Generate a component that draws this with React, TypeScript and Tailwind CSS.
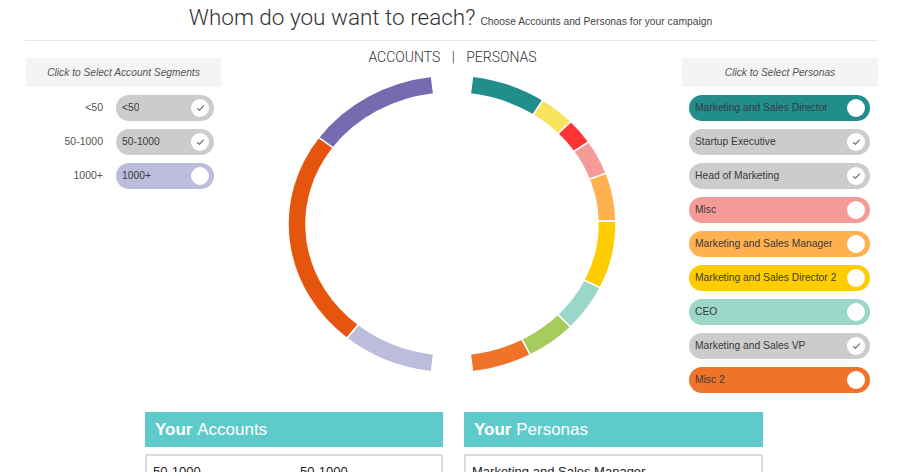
import React from "react";

const font = { fontFamily: '"Liberation Sans", Arial, sans-serif' };

type Seg = { from: number; to: number; color: string };

const accountSegs: Seg[] = [
  { from: 187.2, to: 219.9, color: "#bcbddc" },
  { from: 219.9, to: 305.6, color: "#e6550d" },
  { from: 305.6, to: 352.8, color: "#756bb1" },
];

const personaSegs: Seg[] = [
  { from: 7.2, to: 33.7, color: "#218e8c" },
  { from: 33.7, to: 46.5, color: "#f7e35e" },
  { from: 46.5, to: 56.5, color: "#ff3535" },
  { from: 56.5, to: 70.1, color: "#f59b97" },
  { from: 70.1, to: 88.8, color: "#ffb04f" },
  { from: 88.8, to: 115.4, color: "#ffcc00" },
  { from: 115.4, to: 133.7, color: "#9bd7c8" },
  { from: 133.7, to: 151.5, color: "#a5cc5d" },
  { from: 151.5, to: 172.8, color: "#ef7329" },
];

const accounts = [
  { label: "<50", checked: true, color: "bg-[#cccccc]" },
  { label: "50-1000", checked: true, color: "bg-[#cccccc]" },
  { label: "1000+", checked: false, color: "bg-[#bcbddc]" },
];

const personas = [
  { label: "Marketing and Sales Director", checked: false, color: "bg-[#218e8c]" },
  { label: "Startup Executive", checked: true, color: "bg-[#cccccc]" },
  { label: "Head of Marketing", checked: true, color: "bg-[#cccccc]" },
  { label: "Misc", checked: false, color: "bg-[#f59b97]" },
  { label: "Marketing and Sales Manager", checked: false, color: "bg-[#ffb04f]" },
  { label: "Marketing and Sales Director 2", checked: false, color: "bg-[#ffcc00]" },
  { label: "CEO", checked: false, color: "bg-[#9bd7c8]" },
  { label: "Marketing and Sales VP", checked: true, color: "bg-[#cccccc]" },
  { label: "Misc 2", checked: false, color: "bg-[#ef7329]" },
];

// ring is a touch wider than tall in the original
const CX = 165;
const CY = 150;
const RX = 164;
const RY = 149;
const W = 18;

function arcPath(from: number, to: number) {
  const r = Math.PI / 180;
  const pt = (a: number, rx: number, ry: number) =>
    `${(CX + rx * Math.sin(a * r)).toFixed(2)} ${(CY - ry * Math.cos(a * r)).toFixed(2)}`;
  const large = to - from > 180 ? 1 : 0;
  return [
    `M ${pt(from, RX, RY)}`,
    `A ${RX} ${RY} 0 ${large} 1 ${pt(to, RX, RY)}`,
    `L ${pt(to, RX - W, RY - W)}`,
    `A ${RX - W} ${RY - W} 0 ${large} 0 ${pt(from, RX - W, RY - W)}`,
    "Z",
  ].join(" ");
}

function Knob({ checked }: { checked: boolean }) {
  return (
    <span className="flex h-[18px] w-[18px] shrink-0 items-center justify-center rounded-full bg-white">
      {checked && (
        <svg width="9" height="8" viewBox="0 0 9 8">
          <polyline
            points="1.2,4.3 3.4,6.3 7.8,1.5"
            fill="none"
            stroke="#555"
            strokeWidth="1.1"
          />
        </svg>
      )}
    </span>
  );
}

function Pill({ label, checked, color }: { label: string; checked: boolean; color: string }) {
  return (
    <div
      className={`flex h-[26px] items-center justify-between rounded-full pl-[6px] pr-[5px] text-[10.3px] text-[#3a3a3a] ${color}`}
    >
      <span className="truncate">{label}</span>
      <Knob checked={checked} />
    </div>
  );
}

function Donut() {
  return (
    <svg width="330" height="300" viewBox="0 0 330 300">
      {[...accountSegs, ...personaSegs].map((s, i) => (
        <path key={i} d={arcPath(s.from, s.to)} fill={s.color} stroke="#fff" strokeWidth="1.5" />
      ))}
    </svg>
  );
}

export default function App() {
  return (
    <div className="h-[472px] w-[900px] overflow-hidden bg-white text-[#333]" style={font}>
      <header className="flex h-[40px] items-baseline justify-center gap-[5px] pt-[2px] pl-[1px]">
        <h1 className="text-[22.5px] leading-[30px] font-light text-[#333]" style={{ fontFamily: "Roboto, sans-serif" }}>
          Whom do you want to reach?
        </h1>
        <span className="text-[10.3px] text-[#444]">Choose Accounts and Personas for your campaign</span>
      </header>
      <div className="ml-[25px] mr-[22px] border-t border-[#e6e6e6]" />

      <div className="mt-[8px] flex">
        <aside className="mt-[9px] ml-[26px] w-[195px]">
          <div className="flex h-[29px] items-center justify-center bg-[#f4f4f4] text-[10.2px] italic text-[#555]">
            Click to Select Account Segments
          </div>
          <div className="flex flex-col gap-[8px] pt-[8px]">
            {accounts.map((a) => (
              <div key={a.label} className="flex items-center">
                <span className="w-[77px] text-right text-[10.5px] text-[#555]">{a.label}</span>
                <div className="ml-[13px] w-[98px]">
                  <Pill {...a} />
                </div>
              </div>
            ))}
          </div>
        </aside>

        <main className="flex flex-1 flex-col items-center">
          <div className="pl-[2px] text-[14px] leading-[16px] text-[#333]" style={{ fontFamily: "Roboto, sans-serif", fontWeight: 300 }}>
            ACCOUNTS <span className="px-[8px]">|</span> PERSONAS
          </div>
          <div className="mt-[9px] pl-[1px]">
            <Donut />
          </div>
        </main>

        <aside className="mt-[9px] mr-[22px] w-[196px]">
          <div className="flex h-[29px] items-center justify-center bg-[#f4f4f4] text-[10.2px] italic text-[#555]">
            Click to Select Personas
          </div>
          <div className="flex flex-col gap-[8px] pt-[8px] pl-[7px] pr-[8px]">
            {personas.map((p) => (
              <Pill key={p.label} {...p} />
            ))}
          </div>
        </aside>
      </div>

      <div className="mt-[19px] flex gap-[21px] pl-[145px]">
        <section className="w-[298px]">
          <div className="flex h-[35px] items-center bg-[#5ecacc] px-[10px] text-[17px] text-white">
            <b>Your</b>&nbsp;Accounts
          </div>
          <div className="mt-[7px] grid h-[40px] grid-cols-[147px_1fr] border-2 border-[#dddddd] px-[6px] pt-[6px] text-[13px] text-[#222]">
            <span>50-1000</span>
            <span>50-1000</span>
          </div>
        </section>
        <section className="w-[299px]">
          <div className="flex h-[35px] items-center bg-[#5ecacc] px-[10px] text-[17px] text-white">
            <b>Your</b>&nbsp;Personas
          </div>
          <div className="mt-[7px] h-[40px] border-2 border-[#dddddd] px-[6px] pt-[6px] text-[13px] text-[#222]">
            Marketing and Sales Manager
          </div>
        </section>
      </div>
    </div>
  );
}
